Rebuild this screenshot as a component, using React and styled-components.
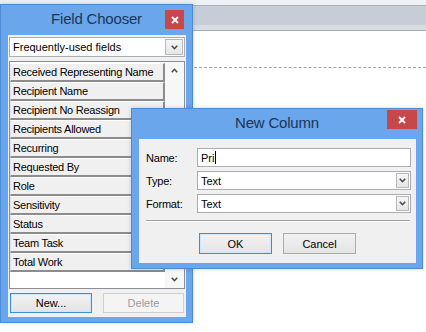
import React from 'react'
import styled, { createGlobalStyle } from 'styled-components'

const GlobalStyle = createGlobalStyle`
  html, body {
    margin: 0;
    padding: 0;
    background: #fff;
  }
  body {
    width: 426px;
    height: 332px;
    overflow: hidden;
    font-family: "Liberation Sans", Arial, sans-serif;
  }
`

const fields = [
  'Received Representing Name',
  'Recipient Name',
  'Recipient No Reassign',
  'Recipients Allowed',
  'Recurring',
  'Requested By',
  'Role',
  'Sensitivity',
  'Status',
  'Team Task',
  'Total Work',
]

// host application behind the dialogs
const Desktop = styled.div`
  position: relative;
  width: 426px;
  height: 332px;
  overflow: hidden;
  background: #fff;
`
const HostTop = styled.div`
  height: 5px;
  background: #eef1f4;
  border-bottom: 1px solid #a9b0ba;
`
const HostRibbon = styled.div`
  height: 19px;
  background: #c6cdd7;
  border-bottom: 5px solid #d7dde5;
`
const HostBody = styled.div`
  border-top: 1px solid #a5adb8;
  padding-top: 36px;
`
const DashedRule = styled.div`
  border-top: 1px dashed #a4a4a4;
`

// window chrome
const Window = styled.div`
  position: absolute;
  left: ${p => p.$x}px;
  top: ${p => p.$y}px;
  width: ${p => p.$w}px;
  height: ${p => p.$h}px;
  box-sizing: border-box;
  display: flex;
  flex-direction: column;
  background: #69a6eb;
  border: 1px solid #4d8bd6;
  padding: 0 ${p => p.$side}px 5px ${p => p.$side + 1}px;
  box-shadow: 0 0 4px rgba(0, 0, 0, 0.18);
`
const TitleBar = styled.div`
  position: relative;
  flex: 0 0 ${p => p.$h}px;
  display: flex;
  align-items: center;
  justify-content: center;
  padding-bottom: 3px;
  box-sizing: border-box;
  margin: 0 -${p => p.$side}px 0 -${p => p.$side + 1}px;
`
const TitleText = styled.span`
  font-size: 15px;
  color: #1d3557;
  letter-spacing: -0.2px;
`
const CloseButton = styled.div`
  position: absolute;
  right: ${p => p.$right}px;
  top: ${p => p.$top}px;
  width: ${p => p.$w}px;
  height: ${p => p.$h}px;
  background: #c7474a;
  display: flex;
  align-items: center;
  justify-content: center;
`
const Client = styled.div`
  flex: 1;
  background: #f0f0f0;
  display: flex;
  flex-direction: column;
  box-sizing: border-box;
  padding: ${p => p.$pad};
`

// controls
const Combo = styled.div`
  height: ${p => p.$h}px;
  box-sizing: border-box;
  display: flex;
  align-items: center;
  justify-content: space-between;
  background: #fff;
  border: 1px solid #abadb3;
  padding: 0 1px 0 3px;
  font-size: 11px;
  color: #000;
`
const DropButton = styled.div`
  width: ${p => p.$w}px;
  height: ${p => p.$h}px;
  box-sizing: border-box;
  border: 1px solid #b8b8b8;
  background: linear-gradient(#f6f6f6, #e6e6e6);
  display: flex;
  align-items: center;
  justify-content: center;
`
const TextBox = styled.div`
  height: 19px;
  box-sizing: border-box;
  display: flex;
  align-items: center;
  background: #fff;
  border: 1px solid #abadb3;
  padding-left: 3px;
  font-size: 11px;
  color: #000;
`
const Caret = styled.span`
  display: inline-block;
  width: 1px;
  height: 13px;
  margin-left: 1px;
  background: #000;
`
const PushButton = styled.div`
  width: ${p => p.$w}px;
  height: ${p => p.$h}px;
  box-sizing: border-box;
  display: flex;
  align-items: center;
  justify-content: center;
  font-size: 11px;
  color: ${p => (p.$disabled ? '#9c9c9c' : '#000')};
  border: 1px solid ${p => (p.$default ? '#3c8fd6' : p.$disabled ? '#cfcfcf' : '#acacac')};
  background: ${p => (p.$disabled ? '#f4f4f4' : 'linear-gradient(#f2f2f2, #e4e4e4)')};
  box-shadow: ${p => (p.$default ? 'inset 0 0 0 1px #cfe6fb' : 'none')};
`

// Field Chooser parts
const ListBox = styled.div`
  margin-top: 4px;
  height: 228px;
  box-sizing: border-box;
  border: 1px solid #8a8e96;
  background: #fff;
  display: flex;
`
const FieldColumn = styled.div`
  width: 155px;
  padding-top: 1px;
  display: flex;
  flex-direction: column;
`
const FieldItem = styled.div`
  height: 19px;
  flex: 0 0 19px;
  box-sizing: border-box;
  background: #f0f0f0;
  border-top: 1px solid #fff;
  border-left: 1px solid #e2e2e2;
  border-bottom: 2px solid #8c8c8c;
  border-right: 2px solid #8c8c8c;
  padding-left: 2px;
  font-size: 11px;
  letter-spacing: -0.25px;
  line-height: 16px;
  color: #000;
  white-space: nowrap;
  overflow: hidden;
`
const ScrollBar = styled.div`
  flex: 1;
  display: flex;
  flex-direction: column;
  justify-content: space-between;
  background: #f7f7f7;
`
const ScrollArrow = styled.div`
  height: 17px;
  display: flex;
  align-items: center;
  justify-content: center;
`
const ButtonRow = styled.div`
  margin-top: 4px;
  display: flex;
  justify-content: space-between;
  padding: 0 1px;
`

// New Column parts
const FormGrid = styled.div`
  display: grid;
  grid-template-columns: 51px 214px;
  grid-auto-rows: 19px;
  row-gap: 4px;
  padding: 0 6px 0 7px;
`
const FieldLabel = styled.div`
  font-size: 11px;
  letter-spacing: -0.2px;
  color: #000;
  display: flex;
  align-items: center;
`
const Separator = styled.div`
  margin: 7px 6px 0 7px;
  border-top: 1px solid #a0a0a0;
  border-bottom: 1px solid #fff;
`
const DialogButtons = styled.div`
  margin-top: 11px;
  display: flex;
  justify-content: center;
  gap: 11px;
`

const Chevron = ({ up, size = 7 }) => (
  <svg width={size} height={size - 2} viewBox="0 0 7 5">
    <polyline
      points={up ? '0.8,4.2 3.5,1.3 6.2,4.2' : '0.8,0.8 3.5,3.7 6.2,0.8'}
      fill="none"
      stroke="#4a4a4a"
      strokeWidth="1.6"
    />
  </svg>
)

const CloseGlyph = () => (
  <svg width="8" height="8" viewBox="0 0 8 8">
    <path d="M1 1 L7 7 M7 1 L1 7" stroke="#fff" strokeWidth="1.8" />
  </svg>
)

export default function App() {
  return (
    <>
      <GlobalStyle />
      <Desktop>
        <HostTop />
        <HostRibbon />
        <HostBody>
          <DashedRule />
        </HostBody>

        <Window $x={0} $y={4} $w={193} $h={319} $side={6}>
          <TitleBar $h={30} $side={6}>
            <TitleText>Field Chooser</TitleText>
            <CloseButton $right={8} $top={5} $w={19} $h={19}>
              <CloseGlyph />
            </CloseButton>
          </TitleBar>
          <Client $pad="2px 1px 4px 1px">
            <Combo $h={20}>
              Frequently-used fields
              <DropButton $w={18} $h={16}>
                <Chevron />
              </DropButton>
            </Combo>
            <ListBox>
              <FieldColumn>
                {fields.map(f => (
                  <FieldItem key={f}>{f}</FieldItem>
                ))}
              </FieldColumn>
              <ScrollBar>
                <ScrollArrow>
                  <Chevron up />
                </ScrollArrow>
                <ScrollArrow>
                  <Chevron />
                </ScrollArrow>
              </ScrollBar>
            </ListBox>
            <ButtonRow>
              <PushButton $w={82} $h={20} $default>New...</PushButton>
              <PushButton $w={81} $h={20} $disabled>Delete</PushButton>
            </ButtonRow>
          </Client>
        </Window>

        <Window $x={131} $y={108} $w={292} $h={161} $side={6}>
          <TitleBar $h={30} $side={6}>
            <TitleText>New Column</TitleText>
            <CloseButton $right={5} $top={1} $w={30} $h={19}>
              <CloseGlyph />
            </CloseButton>
          </TitleBar>
          <Client $pad="9px 0 0 0">
            <FormGrid>
              <FieldLabel>Name:</FieldLabel>
              <TextBox>
                Pri<Caret />
              </TextBox>
              <FieldLabel>Type:</FieldLabel>
              <Combo $h={19}>
                Text
                <DropButton $w={13} $h={15}>
                  <Chevron />
                </DropButton>
              </Combo>
              <FieldLabel>Format:</FieldLabel>
              <Combo $h={19}>
                Text
                <DropButton $w={13} $h={15}>
                  <Chevron />
                </DropButton>
              </Combo>
            </FormGrid>
            <Separator />
            <DialogButtons>
              <PushButton $w={73} $h={21} $default>OK</PushButton>
              <PushButton $w={73} $h={21}>Cancel</PushButton>
            </DialogButtons>
          </Client>
        </Window>
      </Desktop>
    </>
  )
}
